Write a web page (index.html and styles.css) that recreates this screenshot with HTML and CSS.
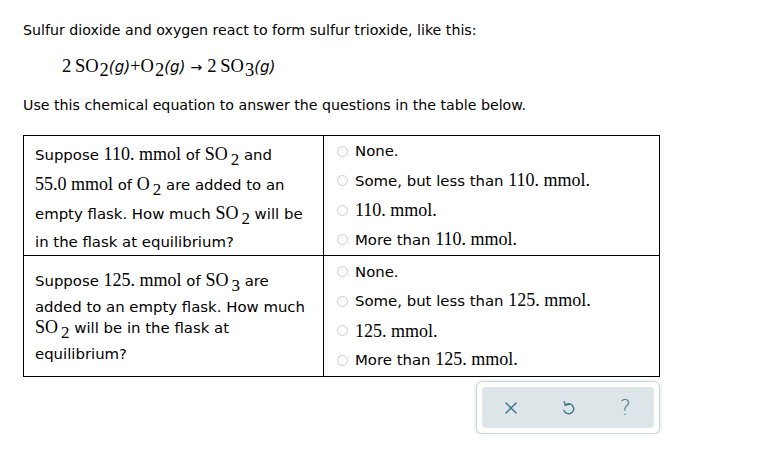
FILE: index.html
```html
<!DOCTYPE html>
<html>
<head>
<meta charset="utf-8">
<link rel="stylesheet" href="styles.css">
</head>
<body>
<div class="page">
  <p class="intro">Sulfur dioxide and oxygen react to form sulfur trioxide, like this:</p>
  <p class="equation"><span class="m">2&thinsp;SO</span><sub class="m">2</sub><span class="g">(g)</span><span class="m">+O</span><sub class="m">2</sub><span class="g">(g)</span> <span class="arrow">&#8594;</span> <span class="m">2&thinsp;SO</span><sub class="m">3</sub><span class="g">(g)</span></p>
  <p class="intro use">Use this chemical equation to answer the questions in the table below.</p>

  <table class="qtable">
    <tr class="row1">
      <td class="question">
        <div class="ql h30">Suppose <span class="m">110.&nbsp;mmol</span> of <span class="m">SO</span><sub class="m">2</sub> and</div>
        <div class="ql h30"><span class="m">55.0&nbsp;mmol</span> of <span class="m">O</span><sub class="m">2</sub> are added to an</div>
        <div class="ql h29">empty flask. How much <span class="m">SO</span><sub class="m">2</sub> will be</div>
        <div class="ql h26">in the flask at equilibrium?</div>
      </td>
      <td class="options">
        <label class="opt"><span class="radio"></span><span>None.</span></label>
        <label class="opt"><span class="radio"></span><span>Some, but less than <span class="m">110.&nbsp;mmol.</span></span></label>
        <label class="opt"><span class="radio"></span><span class="m">110.&nbsp;mmol.</span></label>
        <label class="opt"><span class="radio"></span><span>More than <span class="m">110.&nbsp;mmol.</span></span></label>
      </td>
    </tr>
    <tr class="row2">
      <td class="question">
        <div class="ql h30">Suppose <span class="m">125.&nbsp;mmol</span> of <span class="m">SO</span><sub class="m">3</sub> are</div>
        <div class="ql h22">added to an empty flask. How much</div>
        <div class="ql h20"><span class="m">SO</span><sub class="m">2</sub> will be in the flask at</div>
        <div class="ql h32">equilibrium?</div>
      </td>
      <td class="options">
        <label class="opt"><span class="radio"></span><span>None.</span></label>
        <label class="opt"><span class="radio"></span><span>Some, but less than <span class="m">125.&nbsp;mmol.</span></span></label>
        <label class="opt"><span class="radio"></span><span class="m">125.&nbsp;mmol.</span></label>
        <label class="opt"><span class="radio"></span><span>More than <span class="m">125.&nbsp;mmol.</span></span></label>
      </td>
    </tr>
  </table>

  <div class="toolbar-wrap">
    <div class="toolbar">
      <button class="tb" aria-label="Clear">
        <svg width="14" height="14" viewBox="0 0 14 14"><path d="M2 2 L12 12 M12 2 L2 12" stroke="#3e7789" stroke-width="1.5" fill="none" stroke-linecap="round"/></svg>
      </button>
      <button class="tb" aria-label="Undo">
        <svg width="14" height="16" viewBox="0 0 14 16"><path d="M4.2 5.2 A5 5 0 1 1 3 10.5" stroke="#3e7789" stroke-width="1.4" fill="none" stroke-linecap="round"/><path d="M3.2 1.8 L4.4 5.4 L8 4.4" stroke="#3e7789" stroke-width="1.4" fill="none" stroke-linecap="round" stroke-linejoin="round"/></svg>
      </button>
      <button class="tb help" aria-label="Help">?</button>
    </div>
  </div>
</div>
</body>
</html>
```

FILE: styles.css
```css
html, body {
  margin: 0;
  padding: 0;
  background: #ffffff;
}

body {
  font-family: "DejaVu Sans", Verdana, sans-serif;
  font-size: 14.2px;
  color: #000000;
}

.page {
  padding: 21px 0 0 23px;
  width: 637px;
}

.intro {
  margin: 0;
  line-height: 18px;
}

.equation {
  margin: 17px 0 0 39px;
  line-height: 20px;
  font-size: 16px;
  white-space: nowrap;
}

.m {
  font-family: "Liberation Serif", "Times New Roman", serif;
  font-size: 18px;
}

.equation .m {
  font-size: 18.5px;
}

.equation sub {
  font-size: 17px;
  vertical-align: -4px;
  line-height: 0;
  margin-left: 1px;
}

.equation .g {
  font-family: "DejaVu Sans", Verdana, sans-serif;
  font-style: italic;
  font-size: 15px;
}

.arrow {
  font-size: 14px;
  font-family: "DejaVu Sans", sans-serif;
}

.use {
  margin-top: 19px;
}

.qtable {
  margin-top: 21px;
  border-collapse: collapse;
  width: 637px;
}

.qtable td {
  border: 1px solid #000000;
  padding: 0;
}

.question {
  width: 288px;
  vertical-align: top;
  font-size: 14.9px;
}

.qtable .row1 .question {
  padding: 4px 0 0 11px;
}

.qtable .row2 .question {
  padding: 10px 0 0 11px;
}

.question .m,
.question sub,
.opt .m {
  line-height: 0;
}

.question sub {
  font-size: 17px;
  vertical-align: -5px;
  margin-left: 3px;
}

.ql {
  white-space: nowrap;
}

.h20 { height: 20px; line-height: 20px; }
.h22 { height: 22px; line-height: 22px; }
.h26 { height: 26px; line-height: 26px; }
.h29 { height: 29px; line-height: 29px; }
.h30 { height: 30px; line-height: 30px; }
.h32 { height: 32px; line-height: 32px; }

.qtable .options {
  padding: 0 0 0 13px;
  vertical-align: middle;
  font-size: 14.9px;
}

.row1 .options {
  height: 119px;
}

.row2 .options {
  height: 120px;
}

.opt {
  display: flex;
  align-items: center;
  height: 29.5px;
  white-space: nowrap;
}

.radio {
  display: inline-block;
  box-sizing: border-box;
  width: 11px;
  height: 11px;
  border: 1px solid #cfcfcf;
  border-radius: 50%;
  background: #fcfcfc;
  margin-right: 7px;
  flex: none;
}

.toolbar-wrap {
  display: flex;
  justify-content: flex-end;
  margin-top: 4px;
}

.toolbar {
  box-sizing: border-box;
  width: 184px;
  height: 53px;
  border: 1px solid #c9d6db;
  border-radius: 6px;
  padding: 5px;
  background: #ffffff;
  box-shadow: 0 1px 4px rgba(120, 150, 160, 0.35);
  display: flex;
}

.toolbar > .tb:first-child {
  border-radius: 4px 0 0 4px;
}

.toolbar > .tb:last-child {
  border-radius: 0 4px 4px 0;
}

.tb {
  flex: 1;
  border: none;
  background: #dee5e8;
  display: flex;
  align-items: center;
  justify-content: center;
  padding: 0;
  margin: 0;
}

.help {
  font-family: "DejaVu Sans", sans-serif;
  font-size: 21px;
  color: #3e7789;
  font-weight: 300;
}
```
